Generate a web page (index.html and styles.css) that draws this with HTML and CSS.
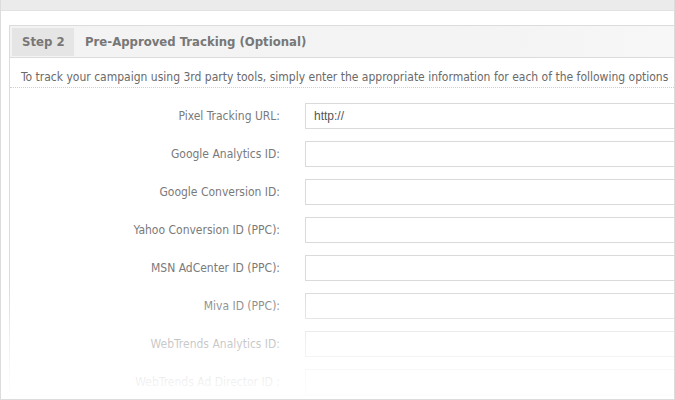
FILE: index.html
```html
<!DOCTYPE html>
<html>
<head>
<meta charset="utf-8">
<link rel="stylesheet" href="styles.css">
</head>
<body>
<div class="frame">
  <div class="topbar"></div>
  <div class="panel">
    <div class="panel-head">
      <div class="step">Step 2</div>
      <div class="title">Pre-Approved Tracking (Optional)</div>
    </div>
    <div class="intro">To track your campaign using 3rd party tools, simply enter the appropriate information for each of the following options</div>
    <div class="form">
      <div class="row"><label>Pixel Tracking URL:</label><div class="field">http://</div></div>
      <div class="row"><label>Google Analytics ID:</label><div class="field"></div></div>
      <div class="row"><label>Google Conversion ID:</label><div class="field"></div></div>
      <div class="row"><label>Yahoo Conversion ID (PPC):</label><div class="field"></div></div>
      <div class="row"><label>MSN AdCenter ID (PPC):</label><div class="field"></div></div>
      <div class="row"><label>Miva ID (PPC):</label><div class="field"></div></div>
      <div class="row"><label>WebTrends Analytics ID:</label><div class="field"></div></div>
      <div class="row"><label>WebTrends Ad Director ID :</label><div class="field"></div></div>
    </div>
  </div>
  <div class="fade"></div>
</div>
</body>
</html>
```
FILE: styles.css
```css
html, body {
  margin: 0;
  padding: 0;
  background: #fff;
}
.frame {
  position: relative;
  width: 675px;
  height: 400px;
  box-sizing: border-box;
  border-left: 1px solid #dcdcdc;
  border-right: 1px solid #dcdcdc;
  border-bottom: 1px solid #dcdcdc;
  overflow: hidden;
  font-family: "DejaVu Sans Condensed", "DejaVu Sans", sans-serif;
  font-size: 12px;
  color: #7a7a7a;
}
.topbar {
  height: 10px;
  background: #ebebeb;
  border-bottom: 1px solid #e2e2e2;
}
.panel {
  margin: 14px 0 0 8px;
  border: 1px solid #dcdcdc;
  border-right: none;
  width: 700px;
}
.panel-head {
  display: flex;
  align-items: center;
  height: 32px;
  box-sizing: border-box;
  padding: 2px;
  background: linear-gradient(100deg, #f3f3f3 0%, #f4f4f4 70%, #f8f8f8 100%);
  border-bottom: 1px solid #dcdcdc;
  font-weight: bold;
  font-size: 13px;
  color: #777;
}
.step {
  width: 62px;
  height: 28px;
  box-sizing: border-box;
  padding-left: 10px;
  line-height: 28px;
  background: #e5e5e5;
}
.title {
  margin-left: 11px;
}
.intro {
  padding: 12px 0 3px 11px;
  border-bottom: 1px dotted #cfcfcf;
  color: #6a6a6a;
  white-space: nowrap;
  line-height: 14px;
}
.form {
  padding-top: 15px;
  display: flex;
  flex-direction: column;
  gap: 12px;
}
.row {
  display: flex;
  align-items: center;
  gap: 25px;
}
.row label {
  width: 270px;
  text-align: right;
}
.field {
  width: 400px;
  height: 26px;
  box-sizing: border-box;
  border: 1px solid #dadada;
  background: #fff;
  padding-left: 8px;
  line-height: 24px;
  font-family: "Liberation Sans", Arial, sans-serif;
  font-size: 12px;
  color: #555;
}
.fade {
  position: absolute;
  left: 0;
  right: 0;
  bottom: 0;
  height: 110px;
  background: linear-gradient(to bottom, rgba(255,255,255,0) 0%, rgba(255,255,255,0.55) 45%, rgba(255,255,255,0.9) 85%, rgba(255,255,255,0.95) 100%);
}
```
